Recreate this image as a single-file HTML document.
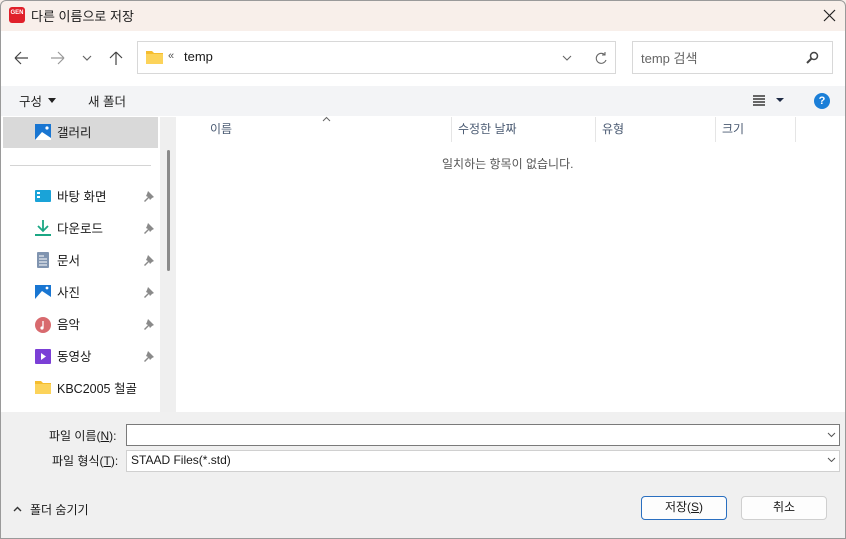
<!DOCTYPE html>
<html><head><meta charset="utf-8"><style>
*{margin:0;padding:0;box-sizing:border-box}
body{width:846px;height:539px;overflow:hidden;font-family:"Liberation Sans","Noto Sans CJK KR",sans-serif;font-size:12px;color:#1a1a1a;background:#fff;position:relative}
.a{position:absolute}
.title{left:0;top:0;width:846px;height:31px;background:#f8efea}
.frame{left:0;top:0;width:846px;height:539px;border:1px solid #9a9a9a;border-radius:6px 6px 0 0;pointer-events:none}
.side{font-size:12.5px}
</style></head><body>
<div class="a title"></div>
<div class="a" style="left:9px;top:7px;width:16px;height:16px;background:#e0202a;border-radius:3px;color:#fff;font-size:6px;font-weight:bold;text-align:center;line-height:12px">GEN</div>
<div class="a" style="left:31px;top:6px;font-size:13px">다른 이름으로 저장</div>
<svg class="a" style="left:823px;top:9px" width="13" height="13"><path d="M1 1L12 12M12 1L1 12" stroke="#222" stroke-width="1.2"/></svg>

<svg class="a" style="left:14px;top:50px" width="110" height="16" fill="none" stroke-width="1.2">
<path d="M1 8H14M1 8L7 2M1 8L7 14" stroke="#444"/>
<path d="M37 8H50M50 8L44 2M50 8L44 14" stroke="#999"/>
<path d="M69 6L73 10L77 6" stroke="#666"/>
<path d="M102 2V15M102 2L96 8M102 2L108 8" stroke="#444"/>
</svg>
<div class="a" style="left:137px;top:41px;width:479px;height:33px;border:1px solid #d8d8d8;background:#fff"></div>
<svg class="a" style="left:146px;top:50px" width="17" height="14"><path d="M0 1H6L8 3H17V14H0Z" fill="#f5bd2f"/><rect x="0" y="4" width="17" height="10" fill="#fcd35a"/></svg>
<div class="a" style="left:168px;top:50px;color:#555;font-size:11px">«</div>
<div class="a" style="left:184px;top:49px;font-size:13px">temp</div>
<svg class="a" style="left:562px;top:52px" width="50" height="14" fill="none" stroke="#666" stroke-width="1.1"><path d="M1 4L5 8L9 4"/><path d="M43 3A5 5 0 1 0 44 8M43 0V3H40" /></svg>
<div class="a" style="left:632px;top:41px;width:201px;height:33px;border:1px solid #d8d8d8;background:#fff"></div>
<div class="a" style="left:641px;top:48px;color:#666;font-size:13px">temp 검색</div>
<svg class="a" style="left:806px;top:51px" width="13" height="13"><circle cx="8" cy="5" r="3.5" fill="none" stroke="#444" stroke-width="1.5"/><path d="M5.5 7.5L1 12" stroke="#444" stroke-width="2"/></svg>

<div class="a" style="left:1px;top:86px;width:844px;height:30px;background:#f3f4f6"></div>
<div class="a" style="left:19px;top:91px;color:#222;font-size:12.5px">구성</div>
<svg class="a" style="left:48px;top:98px" width="8" height="5"><path d="M0 0H8L4 5Z" fill="#222"/></svg>
<div class="a" style="left:88px;top:91px;color:#222;font-size:12.5px">새 폴더</div>
<svg class="a" style="left:753px;top:95px" width="34" height="11"><path d="M0 1H12M0 4H12M0 7H12M0 10H12" stroke="#111" stroke-width="1.2"/><path d="M23 3H31L27 7Z" fill="#1e2a44"/></svg>
<div class="a" style="left:814px;top:93px;width:16px;height:16px;border-radius:50%;background:#1b7fd8;color:#fff;font-weight:bold;font-size:11px;text-align:center;line-height:16px">?</div>

<div class="a" style="left:3px;top:117px;width:155px;height:31px;background:#d9d9d9"></div>
<svg class="a" style="left:35px;top:124px" width="16" height="16"><rect width="16" height="16" fill="#1976d2"/><path d="M0 16L7 8L16 14V16Z" fill="#fff"/><circle cx="12" cy="4" r="1.6" fill="#fff"/></svg>
<div class="a side" style="left:57px;top:122px">갤러리</div>
<div class="a" style="left:10px;top:165px;width:141px;height:1px;background:#d4d4d4"></div>
<div class="a" style="left:160px;top:117px;width:16px;height:295px;background:#efefef"></div>
<div class="a" style="left:167px;top:150px;width:3px;height:121px;background:#8a8a8a;border-radius:2px"></div>

<svg class="a" style="left:35px;top:189px" width="16" height="14"><rect y="1" width="16" height="12" rx="1" fill="#1aa3d8"/><rect x="2" y="3" width="3" height="2" fill="#fff"/><rect x="2" y="7" width="3" height="2" fill="#fff"/></svg>
<div class="a side" style="left:57px;top:186px">바탕 화면</div>
<svg class="a" style="left:35px;top:220px" width="16" height="16"><path d="M8 0V11M3 6L8 11L13 6" stroke="#1ba784" stroke-width="1.8" fill="none"/><rect y="14" width="16" height="2" fill="#1ba784"/></svg>
<div class="a side" style="left:57px;top:218px">다운로드</div>
<svg class="a" style="left:37px;top:252px" width="12" height="16"><rect width="12" height="16" rx="1" fill="#8094b0"/><path d="M2 4H7M2 7H10M2 10H10M2 13H10" stroke="#fff"/></svg>
<div class="a side" style="left:57px;top:250px">문서</div>
<svg class="a" style="left:35px;top:285px" width="16" height="14"><rect width="16" height="14" fill="#1976d2"/><path d="M0 14L7 6L16 12V14Z" fill="#fff"/><circle cx="12" cy="3" r="1.4" fill="#fff"/></svg>
<div class="a side" style="left:57px;top:282px">사진</div>
<svg class="a" style="left:35px;top:317px" width="16" height="16"><circle cx="8" cy="8" r="8" fill="#d86a6e"/><path d="M8 4V11" stroke="#fff" stroke-width="1.3"/><circle cx="7" cy="11" r="1.6" fill="#fff"/></svg>
<div class="a side" style="left:57px;top:314px">음악</div>
<svg class="a" style="left:35px;top:349px" width="16" height="15"><rect width="16" height="15" rx="1" fill="#7b3fd6"/><path d="M6 4L11 7.5L6 11Z" fill="#fff"/></svg>
<div class="a side" style="left:57px;top:346px">동영상</div>
<svg class="a" style="left:35px;top:381px" width="16" height="13"><path d="M0 0H6L8 2H16V13H0Z" fill="#f5bd2f"/><rect y="3" width="16" height="10" fill="#fcd35a"/></svg>
<div class="a side" style="left:57px;top:378px">KBC2005 철골</div>
<svg class="a" style="left:144px;top:191px" width="11" height="180" fill="#8a8a8a">
<g id="p"><path d="M4 0L10 6L8 7L6 9L5 7L1 11L0 10L4 6L2 5L3 3Z"/></g>
<use href="#p" y="32"/><use href="#p" y="64"/><use href="#p" y="96"/><use href="#p" y="128"/><use href="#p" y="160"/></svg>

<svg class="a" style="left:322px;top:116px" width="9" height="6"><path d="M1 5L4.5 1.5L8 5" stroke="#666" fill="none"/></svg>
<div class="a" style="left:210px;top:120px;color:#4a5a72;font-size:12px">이름</div>
<div class="a" style="left:451px;top:117px;width:1px;height:25px;background:#e5e5e5"></div>
<div class="a" style="left:458px;top:120px;color:#4a5a72">수정한 날짜</div>
<div class="a" style="left:595px;top:117px;width:1px;height:25px;background:#e5e5e5"></div>
<div class="a" style="left:602px;top:120px;color:#4a5a72">유형</div>
<div class="a" style="left:715px;top:117px;width:1px;height:25px;background:#e5e5e5"></div>
<div class="a" style="left:722px;top:120px;color:#4a5a72">크기</div>
<div class="a" style="left:795px;top:117px;width:1px;height:25px;background:#e5e5e5"></div>
<div class="a" style="left:442px;top:155px;color:#555">일치하는 항목이 없습니다.</div>

<div class="a" style="left:1px;top:412px;width:844px;height:127px;background:#f0f0f0"></div>
<div class="a" style="left:49px;top:427px">파일 이름(<u>N</u>):</div>
<div class="a" style="left:126px;top:424px;width:714px;height:22px;background:#fff;border:1px solid #7a7a7a"></div>
<div class="a" style="left:52px;top:452px">파일 형식(<u>T</u>):</div>
<div class="a" style="left:126px;top:450px;width:714px;height:22px;background:#fff;border:1px solid #d0d0d0"></div>
<div class="a" style="left:131px;top:453px">STAAD Files(*.std)</div>
<svg class="a" style="left:827px;top:432px" width="9" height="30" fill="none" stroke="#555"><path d="M1 2L4.5 5.5L8 2M1 27L4.5 30.5L8 27" transform="translate(0,-1)"/></svg>
<svg class="a" style="left:13px;top:506px" width="9" height="6"><path d="M1 5L4.5 1.5L8 5" stroke="#333" stroke-width="1.4" fill="none"/></svg>
<div class="a" style="left:30px;top:501px">폴더 숨기기</div>
<div class="a" style="left:641px;top:496px;width:86px;height:24px;background:#fdfdfd;border:1px solid #2a6fc0;border-radius:4px;text-align:center;line-height:21px">저장(<u>S</u>)</div>
<div class="a" style="left:741px;top:496px;width:86px;height:24px;background:#fdfdfd;border:1px solid #cfcfcf;border-radius:4px;text-align:center;line-height:21px">취소</div>
<div class="a frame"></div>
</body></html>
